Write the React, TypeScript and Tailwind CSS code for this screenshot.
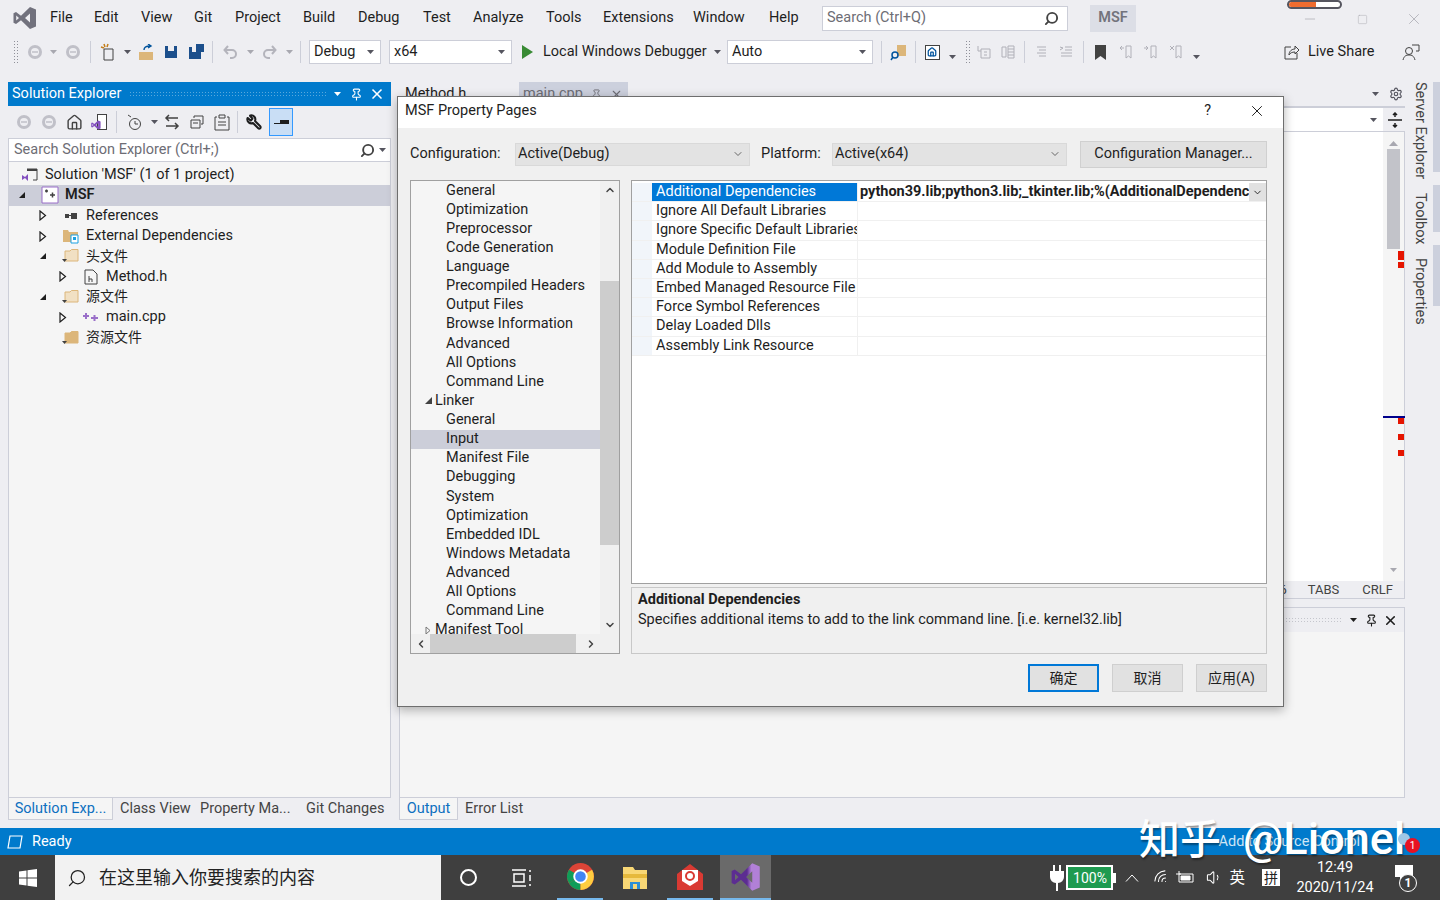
import { ReactNode } from 'react'
import { ChevronDown, ChevronLeft, ChevronRight, ChevronUp, Home, Minus, Pin, Search, Settings, Square, Volume1, Wifi, Wrench, X } from 'lucide-react'

const FONT = "font-['Roboto','Noto_Sans_CJK_SC',sans-serif]"

const MENU = [
  { label: 'File', w: 'w-[44px]' },
  { label: 'Edit', w: 'w-[47px]' },
  { label: 'View', w: 'w-[53px]' },
  { label: 'Git', w: 'w-[41px]' },
  { label: 'Project', w: 'w-[68px]' },
  { label: 'Build', w: 'w-[55px]' },
  { label: 'Debug', w: 'w-[65px]' },
  { label: 'Test', w: 'w-[50px]' },
  { label: 'Analyze', w: 'w-[73px]' },
  { label: 'Tools', w: 'w-[57px]' },
  { label: 'Extensions', w: 'w-[90px]' },
  { label: 'Window', w: 'w-[76px]' },
  { label: 'Help', w: 'w-[53px]' },
]

const LINKER_PAGES = [
  { label: 'General', depth: 2 },
  { label: 'Optimization', depth: 2 },
  { label: 'Preprocessor', depth: 2 },
  { label: 'Code Generation', depth: 2 },
  { label: 'Language', depth: 2 },
  { label: 'Precompiled Headers', depth: 2 },
  { label: 'Output Files', depth: 2 },
  { label: 'Browse Information', depth: 2 },
  { label: 'Advanced', depth: 2 },
  { label: 'All Options', depth: 2 },
  { label: 'Command Line', depth: 2 },
  { label: 'Linker', depth: 1, open: true },
  { label: 'General', depth: 2 },
  { label: 'Input', depth: 2, selected: true },
  { label: 'Manifest File', depth: 2 },
  { label: 'Debugging', depth: 2 },
  { label: 'System', depth: 2 },
  { label: 'Optimization', depth: 2 },
  { label: 'Embedded IDL', depth: 2 },
  { label: 'Windows Metadata', depth: 2 },
  { label: 'Advanced', depth: 2 },
  { label: 'All Options', depth: 2 },
  { label: 'Command Line', depth: 2 },
  { label: 'Manifest Tool', depth: 1, closed: true },
]

const PROPS = [
  'Additional Dependencies',
  'Ignore All Default Libraries',
  'Ignore Specific Default Libraries',
  'Module Definition File',
  'Add Module to Assembly',
  'Embed Managed Resource File',
  'Force Symbol References',
  'Delay Loaded Dlls',
  'Assembly Link Resource',
]

function Caret({ className = 'text-[#55555f]' }: { className?: string }) {
  return (
    <svg width="7" height="4" viewBox="0 0 7 4" className={`${className} shrink-0`}>
      <path d="M0 0h7L3.500 4z" fill="currentColor" />
    </svg>
  )
}

function Slot({ w, children }: { w: string; children?: ReactNode }) {
  return <div className={`${w} flex h-full shrink-0 items-center justify-center`}>{children}</div>
}

function Sep() {
  return <div className="h-[22px] w-px shrink-0 bg-[#ccced8]" />
}

function Grip() {
  return <div className="h-[24px] w-[5px] bg-[radial-gradient(#8f9099_1px,transparent_1px)] bg-[length:3px_3px]" />
}

function Round({ className = 'text-[#c0c0c8]' }: { className?: string }) {
  return (
    <svg width="16" height="16" viewBox="0 0 16 16" className={className}>
      <circle cx="8" cy="8" r="7" fill="currentColor" />
      <circle cx="8" cy="8" r="4" fill="#eeeef2" />
      <path d="M5 8h6" stroke="currentColor" strokeWidth="1.500" />
    </svg>
  )
}

function VsLogo({ color = '#71717d', size = 24 }: { color?: string; size?: number }) {
  return (
    <svg width={size} height={size} viewBox="0 0 24 24" className="shrink-0">
      <defs>
        <linearGradient id="vsg" x1="0" x2="1" y1="0" y2="0">
          <stop offset="0.55" stopColor="#5c2d91" />
          <stop offset="0.7" stopColor="#b180d7" />
        </linearGradient>
      </defs>
      <path
        fillRule="evenodd"
        fill={color}
        d="M17 1l6 2.600v16.800L17 23 8 14.200 3 18l-2.500-1.200V7.200L3 6l5 3.800zM17 7.400L12 12l5 4.600zM3.200 9.400v5.200L6 12z"
      />
    </svg>
  )
}

function Save({ className = 'text-[#1c4f8c]' }: { className?: string }) {
  return (
    <svg width="14" height="14" viewBox="0 0 14 14" className={className}>
      <path d="M1 1h12v12H1z" fill="currentColor" />
      <path d="M4 1h6v5H4z" fill="#eeeef2" />
    </svg>
  )
}

function ToolDoc({ d = 'M2 3h3M2 6h6M4 9h8M4 12h8M11 2v12' }: { d?: string }) {
  return (
    <svg width="16" height="16" viewBox="0 0 16 16" fill="none" stroke="#b0b0b8" className="shrink-0">
      <path d={d} />
    </svg>
  )
}

function TreeArrow({ open }: { open?: boolean }) {
  return open ? (
    <svg width="8" height="8" viewBox="0 0 8 8">
      <path d="M7 1v6H1z" fill="#1e1e1e" />
    </svg>
  ) : (
    <svg width="8" height="11" viewBox="0 0 8 11" fill="none">
      <path d="M1 1l5.500 4.500L1 10z" stroke="#1e1e1e" strokeWidth="1.200" />
    </svg>
  )
}

function FilterFolder({ solid }: { solid?: boolean }) {
  return (
    <svg width="18" height="16" viewBox="0 0 18 16">
      <path d="M3 3h5l1.500-1.500H16V13H3z" fill={solid ? '#dcb67a' : '#f1e0c3'} stroke="#dcb67a" />
      <path d="M0 11h5l-2.500 3z" fill="#424242" />
    </svg>
  )
}

function TreeRow({ indent, open, arrow, icon, children, selected, bold }: { indent: string; open?: boolean; arrow?: boolean; icon: ReactNode; children: ReactNode; selected?: boolean; bold?: boolean }) {
  return (
    <div className={`flex h-[20.3px] items-center text-[14.5px] text-[#1e1e1e] ${selected ? 'bg-[#ccced9]' : ''} ${bold ? 'font-semibold' : ''}`}>
      <div className={`${indent} flex shrink-0 justify-end ${arrow ? 'pr-[13px]' : ''}`}>{arrow && <TreeArrow open={open} />}</div>
      <div className="flex w-[21px] shrink-0 justify-center">{icon}</div>
      <span className="ml-[5px] whitespace-nowrap">{children}</span>
    </div>
  )
}

function TitleRow() {
  return (
    <div className="flex h-[36px] items-center text-[14.5px] text-[#1e1e1e]">
      <div className="flex w-[50px] shrink-0 justify-center">
        <VsLogo />
      </div>
      {MENU.map(m => (
        <div key={m.label} className={`${m.w} shrink-0`}>{m.label}</div>
      ))}
      <div className="flex h-[25px] w-[246px] shrink-0 items-center justify-between border border-[#ccced8] bg-white pl-[4px] pr-[8px] text-[#6d6d75]">
        <span>Search (Ctrl+Q)</span>
        <Search size={15} strokeWidth={3} className="-scale-x-100 text-[#424242]" />
      </div>
      <div className="ml-[22px] flex h-[27px] w-[46px] shrink-0 items-center justify-center bg-[#dcdee6] font-semibold text-[#73737c]">MSF</div>
      <div className="relative flex-1">
        <div className="absolute left-[151px] top-[-18px] h-[9px] w-[55px] overflow-hidden rounded-full border-2 border-[#55555f] bg-white">
          <div className="h-full w-[27px] bg-[#ef6c2f]" />
        </div>
        <div className="absolute left-[166px] top-[-8px] flex items-center text-[#a6a6ae]">
          <Minus size={16} strokeWidth={1} />
          <div className="ml-[36px] flex h-[16px] w-[16px] items-center justify-center">
            <Square size={11} strokeWidth={1} />
          </div>
          <X size={18} strokeWidth={1} className="ml-[35px]" />
        </div>
      </div>
    </div>
  )
}

function Combo({ w, label }: { w: string; label: string }) {
  return (
    <div className={`${w} flex h-[24px] shrink-0 items-center justify-between border border-[#ccced8] bg-white pl-[4px] pr-[6px]`}>
      <span>{label}</span>
      <Caret />
    </div>
  )
}

function ToolbarRow() {
  return (
    <div className="flex h-[32px] items-center text-[14.5px] text-[#1e1e1e]">
      <Slot w="w-[26px]"><div className="ml-[4px]"><Grip /></div></Slot>
      <Slot w="w-[18px]"><Round /></Slot>
      <Slot w="w-[18px]"><Caret className="text-[#a8a8b0]" /></Slot>
      <Slot w="w-[22px]"><Round /></Slot>
      <Slot w="w-[12px]"><Sep /></Slot>
      <Slot w="w-[24px]">
        <svg width="16" height="18" viewBox="0 0 16 18" fill="none">
          <path d="M4 6h9v11H4z" stroke="#424242" />
          <path d="M4 1l1 3M1 4l3 1M8 1L7 4" stroke="#c27d1a" strokeWidth="1.500" />
        </svg>
      </Slot>
      <Slot w="w-[14px]"><Caret /></Slot>
      <Slot w="w-[24px]">
        <svg width="17" height="17" viewBox="0 0 17 17">
          <path d="M1 8h14v8H1z" fill="#dcb67a" />
          <path d="M6 6c0-3 3-4 6-4M10 0l3 2-3 2" fill="none" stroke="#00539c" strokeWidth="1.400" />
        </svg>
      </Slot>
      <Slot w="w-[26px]"><Save /></Slot>
      <Slot w="w-[24px]">
        <div className="relative h-[16px] w-[16px]">
          <div className="absolute bottom-0 left-0"><Save /></div>
          <div className="absolute right-0 top-0 h-[8px] w-[8px] bg-[#1c4f8c]" />
        </div>
      </Slot>
      <Slot w="w-[8px]"><Sep /></Slot>
      <Slot w="w-[28px]">
        <svg width="15" height="15" viewBox="0 0 15 15" fill="none" stroke="#b4b4bc" strokeWidth="2">
          <path d="M2 5h7a4 4 0 010 8H7M5 1L1.500 5 5 9" />
        </svg>
      </Slot>
      <Slot w="w-[12px]"><Caret className="text-[#a8a8b0]" /></Slot>
      <Slot w="w-[26px]">
        <svg width="15" height="15" viewBox="0 0 15 15" fill="none" stroke="#b4b4bc" strokeWidth="2">
          <path d="M13 5H6a4 4 0 000 8h2M10 1l3.500 4L10 9" />
        </svg>
      </Slot>
      <Slot w="w-[14px]"><Caret className="text-[#a8a8b0]" /></Slot>
      <Slot w="w-[8px]"><Sep /></Slot>
      <div className="w-[5px] shrink-0" />
      <Combo w="w-[72px]" label="Debug" />
      <div className="w-[8px] shrink-0" />
      <Combo w="w-[123px]" label="x64" />
      <Slot w="w-[31px]">
        <svg width="11" height="14" viewBox="0 0 11 14"><path d="M0 0l11 7-11 7z" fill="#388a34" /></svg>
      </Slot>
      <div className="w-[164px] shrink-0 whitespace-nowrap">Local Windows Debugger</div>
      <Slot w="w-[20px]"><Caret /></Slot>
      <Combo w="w-[146px]" label="Auto" />
      <Slot w="w-[16px]"><Sep /></Slot>
      <Slot w="w-[18px]">
        <svg width="17" height="17" viewBox="0 0 17 17">
          <path d="M7 1h9v11H7z" fill="#dcb67a" />
          <circle cx="5" cy="11" r="3" fill="none" stroke="#00539c" strokeWidth="1.500" />
          <path d="M3 13l-2 3" stroke="#00539c" strokeWidth="1.500" />
        </svg>
      </Slot>
      <Slot w="w-[16px]"><Sep /></Slot>
      <Slot w="w-[18px]">
        <div className="flex h-[15px] w-[15px] items-center justify-center border border-[#424242] bg-white">
          <Home size={10} strokeWidth={3} className="text-[#00539c]" />
        </div>
      </Slot>
      <Slot w="w-[22px]"><div className="mt-[10px]"><Caret /></div></Slot>
      <Slot w="w-[8px]"><Grip /></Slot>
      <div className="w-px shrink-0" />
      <Slot w="w-[24px]"><ToolDoc d="M2 2v5h3M5 5h9v9H5zM8 8h3M8 11h3" /></Slot>
      <Slot w="w-[24px]"><ToolDoc d="M2 3h4v10H2zM8 2h6v12H8zM8 5h6M8 8h6M8 11h6" /></Slot>
      <Slot w="w-[8px]"><Sep /></Slot>
      <Slot w="w-[28px]"><ToolDoc d="M3 3h9M5 6h7M3 9h9M5 12h7" /></Slot>
      <Slot w="w-[20px]"><ToolDoc d="M2 3l3 1-3 2M7 3h7M7 6h7M3 9h11M3 12h11" /></Slot>
      <Slot w="w-[14px]"><Sep /></Slot>
      <Slot w="w-[20px]">
        <svg width="11" height="15" viewBox="0 0 11 15"><path d="M0 0h11v15l-5.500-4L0 15z" fill="#424242" /></svg>
      </Slot>
      <Slot w="w-[32px]"><ToolDoc d="M8 2h5v12l-2.500-2L8 14zM6 4H2l2-2M2 4l2 2" /></Slot>
      <Slot w="w-[18px]"><ToolDoc d="M8 2h5v12l-2.500-2L8 14zM1 4h4l-2-2M5 4L3 6" /></Slot>
      <Slot w="w-[32px]"><ToolDoc d="M8 2h5v12l-2.500-2L8 14zM2 2l4 4M6 2L2 6" /></Slot>
      <Slot w="w-[8px]"><div className="mt-[10px]"><Caret /></div></Slot>
      <div className="ml-[84px] flex h-full shrink-0 items-center">
        <svg width="16" height="16" viewBox="0 0 16 16" fill="none" stroke="#424242">
          <path d="M7 3H1v12h12V9M5 11c0-4 3-6 6-6V2l4 4-4 4V8c-3 0-5 1-6 3z" />
        </svg>
        <span className="ml-[8px] w-[65px] whitespace-nowrap">Live Share</span>
        <svg width="18" height="18" viewBox="0 0 18 18" fill="none" stroke="#424242" className="ml-[29px]">
          <circle cx="7" cy="8" r="3.500" />
          <path d="M1 17c1-4 3-5 6-5s5 1 6 5M10 2h7v6h-3" />
        </svg>
      </div>
    </div>
  )
}

function SolutionExplorer() {
  return (
    <div className="flex w-[383px] shrink-0 flex-col">
      <div className="flex h-[24px] shrink-0 items-center bg-[#007acc] pl-[4px] pr-[6px] text-[14.5px] text-white">
        <span className="whitespace-nowrap">Solution Explorer</span>
        <div className="mx-[8px] h-[6px] flex-1 bg-[radial-gradient(#59a8dd_1px,transparent_1px)] bg-[length:3px_3px]" />
        <Caret className="text-white" />
        <Pin size={13} className="ml-[9px] text-white" />
        <X size={16} strokeWidth={2.500} className="ml-[6px] text-white" />
      </div>
      <div className="flex h-[32px] shrink-0 items-center pl-[6px]">
        <Slot w="w-[20px]"><Round /></Slot>
        <Slot w="w-[30px]"><Round /></Slot>
        <Slot w="w-[20px]"><Home size={17} className="text-[#424242]" /></Slot>
        <Slot w="w-[30px]">
          <div className="relative h-[16px] w-[16px]">
            <div className="absolute right-0 top-0 h-[16px] w-[10px] border border-[#424242] bg-white" />
            <div className="absolute bottom-0 left-0"><VsLogo color="#8450c0" size={10} /></div>
          </div>
        </Slot>
        <Slot w="w-[4px]"><Sep /></Slot>
        <Slot w="w-[32px]">
          <svg width="16" height="17" viewBox="0 0 16 17" fill="none" stroke="#424242">
            <circle cx="9" cy="10" r="5.500" />
            <path d="M9 7v3h3M2 1l3 2" />
          </svg>
        </Slot>
        <Slot w="w-[8px]"><Caret /></Slot>
        <Slot w="w-[28px]">
          <svg width="16" height="16" viewBox="0 0 16 16" fill="none" stroke="#424242" strokeWidth="1.500">
            <path d="M5 1L2 4l3 3M2 4h12M11 9l3 3-3 3M14 12H2" />
          </svg>
        </Slot>
        <Slot w="w-[22px]">
          <svg width="14" height="14" viewBox="0 0 14 14" fill="none" stroke="#424242">
            <path d="M4 3V1h9v8h-2M1 5h9v8H1zM3 8h5" />
          </svg>
        </Slot>
        <Slot w="w-[28px]">
          <svg width="16" height="17" viewBox="0 0 16 17" fill="none" stroke="#424242">
            <path d="M3 3H1v13h14V3h-2M5 1h6v3H5zM4 8h8M4 11h8" />
          </svg>
        </Slot>
        <Slot w="w-[3px]"><Sep /></Slot>
        <Slot w="w-[30px]"><Wrench size={16} strokeWidth={3} className="-scale-x-100 text-[#1e1e1e]" /></Slot>
        <div className="flex h-[28px] w-[24px] items-center justify-center border border-[#3399ff] bg-[#c9def5]">
          <div className="flex items-end">
            <div className="h-px w-[6px] bg-[#1e1e1e]" />
            <div className="h-[4px] w-[9px] bg-[#1e1e1e]" />
          </div>
        </div>
      </div>
      <div className="flex h-[24px] shrink-0 items-center justify-between border border-[#ccced8] bg-white pl-[5px] pr-[4px] text-[14.5px] text-[#6d6d75]">
        <span>Search Solution Explorer (Ctrl+;)</span>
        <div className="flex items-center gap-[4px]">
          <Search size={15} strokeWidth={3} className="-scale-x-100 text-[#424242]" />
          <Caret />
        </div>
      </div>
      <div className="min-h-0 flex-1 border border-t-0 border-[#ccced8] bg-[#f5f5f5] pt-[3px]">
        <TreeRow indent="w-[10px]" icon={<svg width="17" height="16" viewBox="0 0 17 16" fill="none"><path d="M6 2h10v11h-4" stroke="#424242" /><path d="M6 2h10v2H6z" fill="#424242" /><path d="M1 8l3 2 3-3v7l-3-3-3 2z" fill="#8450c0" /></svg>}>
          Solution 'MSF' (1 of 1 project)
        </TreeRow>
        <TreeRow indent="w-[30px]" arrow open selected bold icon={<svg width="18" height="18" viewBox="0 0 18 18" fill="none"><path d="M1 1h16v16H1z" fill="#fff" stroke="#9a6fc9" /><path d="M4 5h3M5.500 3.500v3M9 9h5M11.500 6.500v5" stroke="#424242" strokeWidth="1.500" /></svg>}>
          MSF
        </TreeRow>
        <TreeRow indent="w-[51px]" arrow icon={<div className="flex items-center"><div className="h-[4px] w-[4px] bg-[#424242]" /><div className="h-px w-[2px] bg-[#424242]" /><div className="h-[6px] w-[6px] bg-[#424242]" /></div>}>References</TreeRow>
        <TreeRow indent="w-[51px]" arrow icon={<svg width="17" height="16" viewBox="0 0 17 16"><path d="M1 2h5l1 2h9v10H1z" fill="#dcb67a" /><path d="M9 7h7v8H9z" fill="#fff" stroke="#1ba1e2" /><path d="M11 9h3v3h-3z" fill="#1ba1e2" /></svg>}>External Dependencies</TreeRow>
        <TreeRow indent="w-[51px]" arrow open icon={<FilterFolder />}><span className="text-[14px]">头文件</span></TreeRow>
        <TreeRow indent="w-[71px]" arrow icon={<svg width="14" height="16" viewBox="0 0 14 16" fill="none" stroke="#424242"><path d="M1 1h8l4 4v10H1z" /><path d="M5 7v6M5 10h3v3" /></svg>}>Method.h</TreeRow>
        <TreeRow indent="w-[51px]" arrow open icon={<FilterFolder />}><span className="text-[14px]">源文件</span></TreeRow>
        <TreeRow indent="w-[71px]" arrow icon={<svg width="16" height="10" viewBox="0 0 16 10" fill="none" stroke="#9a6fc9" strokeWidth="2"><path d="M0 4h6M3 1v6M8 6h7M11.500 3v6" /></svg>}>main.cpp</TreeRow>
        <TreeRow indent="w-[51px]" icon={<FilterFolder solid />}><span className="text-[14px]">资源文件</span></TreeRow>
      </div>
      <div className="flex h-[22px] shrink-0 items-center whitespace-nowrap text-[14.5px] text-[#444]">
        <div className="flex h-full w-[105px] items-center justify-center border border-t-0 border-[#ccced8] bg-[#f5f5f5] text-[#0e70c0]">Solution Exp...</div>
        <span className="ml-[7px] w-[80px]">Class View</span>
        <span className="w-[106px]">Property Ma...</span>
        <span>Git Changes</span>
      </div>
    </div>
  )
}

function Workspace() {
  return (
    <div className="flex w-[1006px] shrink-0 flex-col">
      <div className="flex h-[24px] shrink-0 items-center text-[14.5px] text-[#1e1e1e]">
        <span className="ml-[6px] w-[114px]">Method.h</span>
        <div className="flex h-full w-[109px] items-center gap-[8px] bg-[#ccd0dd] pl-[4px] text-[#6d6d75]">
          main.cpp <Pin size={11} /> <X size={13} />
        </div>
        <div className="ml-auto flex items-center gap-[10px] pr-[2px]">
          <Caret />
          <Settings size={14} className="text-[#55555f]" />
        </div>
      </div>
      <div className="flex h-[25px] shrink-0 justify-end border-t-2 border-[#ccced8]">
        <div className="flex h-full flex-1 items-center justify-end bg-white pr-[6px]"><Caret /></div>
        <div className="ml-[2px] flex w-[20px] items-center justify-center text-[#1e1e1e]">
          <svg width="14" height="16" viewBox="0 0 14 16" fill="none" stroke="currentColor" strokeWidth="1.500">
            <path d="M0 8h14M7 1v4M7 11v4M5 3l2-2 2 2M5 13l2 2 2-2" />
          </svg>
        </div>
      </div>
      <div className="flex h-[450px] min-h-0 shrink-0 border-t border-[#ccced8]">
        <div className="flex-1 bg-white" />
        <div className="relative flex w-[22px] flex-col items-center border-r border-[#ccced8] bg-[#f5f5f5]">
          <div className="mt-[9px]"><svg width="9" height="5" viewBox="0 0 9 5"><path d="M0 5h9L4.500 0z" fill="#a8a8b0" /></svg></div>
          <div className="mt-[3px] h-[100px] w-[13px] bg-[#c2c3c9]" />
          <div className="absolute left-[15px] top-[119px] h-[9px] w-[6px] bg-[#e51400]" />
          <div className="absolute left-[15px] top-[130px] h-[6px] w-[6px] bg-[#e51400]" />
          <div className="absolute left-0 top-[284px] h-[2px] w-[22px] bg-[#00008b]" />
          <div className="absolute left-[15px] top-[286px] h-[6px] w-[6px] bg-[#e51400]" />
          <div className="absolute left-[15px] top-[302px] h-[6px] w-[6px] bg-[#e51400]" />
          <div className="absolute left-[15px] top-[318px] h-[6px] w-[6px] bg-[#e51400]" />
          <div className="absolute bottom-[9px]"><Caret className="text-[#a8a8b0]" /></div>
        </div>
      </div>
      <div className="flex h-[18px] shrink-0 items-center justify-end border border-t-0 border-[#ccced8] pr-[11px] text-[13px] text-[#444]">
        <span className="mr-[21px]">6</span>
        <span>TABS</span>
        <span className="ml-[23px]">CRLF</span>
      </div>
      <div className="mt-[8px] flex min-h-0 flex-1 flex-col border border-[#ccced8] bg-[#f5f5f5]">
        <div className="flex h-[24px] shrink-0 items-center justify-end bg-[#eeeef2] pr-[6px]">
          <div className="mr-[8px] h-[6px] w-[60px] bg-[radial-gradient(#c5c6cd_1px,transparent_1px)] bg-[length:3px_3px]" />
          <Caret className="text-[#1e1e1e]" />
          <Pin size={13} className="ml-[8px] text-[#1e1e1e]" />
          <X size={15} strokeWidth={2.500} className="ml-[5px] text-[#1e1e1e]" />
        </div>
      </div>
      <div className="flex h-[22px] shrink-0 items-center text-[14.5px] text-[#444]">
        <div className="flex h-full w-[59px] items-center justify-center border border-t-0 border-[#ccced8] bg-[#f5f5f5] text-[#0e70c0]">Output</div>
        <span className="ml-[7px]">Error List</span>
      </div>
    </div>
  )
}

function SideTabs() {
  return (
    <div className="ml-[5px] flex flex-1 gap-[3px] text-[14.5px] text-[#444]">
      <div className="flex w-[20px] flex-col">
        <span className="h-[96px] whitespace-nowrap leading-[20px] [writing-mode:vertical-rl]">Server Explorer</span>
        <span className="mt-[15px] h-[50px] whitespace-nowrap leading-[20px] [writing-mode:vertical-rl]">Toolbox</span>
        <span className="mt-[15px] h-[64px] whitespace-nowrap leading-[20px] [writing-mode:vertical-rl]">Properties</span>
      </div>
      <div className="flex flex-1 flex-col">
        <div className="h-[90px] bg-[#ccd0dd]" />
        <div className="mt-[13px] h-[47px] bg-[#ccd0dd]" />
        <div className="mt-[13px] h-[61px] bg-[#ccd0dd]" />
      </div>
    </div>
  )
}

function DialogSelect({ w, label }: { w: string; label: string }) {
  return (
    <div className={`${w} flex h-[23px] shrink-0 items-center justify-between border border-[#d9d9d9] bg-[#e3e3e3] pl-[2px] pr-[5px]`}>
      <span>{label}</span>
      <ChevronDown size={12} className="text-[#666]" />
    </div>
  )
}

function PropertyDialog() {
  return (
    <div className="absolute left-[397px] top-[96px] flex h-[611px] w-[887px] flex-col border border-[#6e6e6e] bg-[#f0f0f0] text-[14.5px] text-[#1e1e1e] shadow-[0_3px_10px_rgba(0,0,0,0.3)]">
      <div className="flex h-[31px] shrink-0 items-center justify-between bg-white pb-[3px] pl-[7px] pr-[17px]">
        <span>MSF Property Pages</span>
        <div className="flex items-center gap-[37px]">
          <span>?</span>
          <X size={18} strokeWidth={1.300} />
        </div>
      </div>
      <div className="flex h-[52px] shrink-0 items-center pl-[12px]">
        <span className="w-[105px]">Configuration:</span>
        <DialogSelect w="w-[235px]" label="Active(Debug)" />
        <span className="ml-[11px] w-[71px]">Platform:</span>
        <DialogSelect w="w-[235px]" label="Active(x64)" />
        <div className="ml-[13px] flex h-[27px] w-[187px] items-center justify-center border border-[#d0d0d0] bg-[#e1e1e1]">Configuration Manager...</div>
      </div>
      <div className="flex h-[474px] shrink-0 pl-[12px] pr-[16px]">
        <div className="flex h-full w-[210px] shrink-0 flex-col border border-[#a0a0a0] bg-[#f5f5f5]">
          <div className="flex min-h-0 flex-1">
            <div className="min-w-0 flex-1 overflow-hidden">
              {LINKER_PAGES.map((p, i) => (
                <div key={i} className={`flex h-[19.13px] items-center whitespace-nowrap ${p.selected ? 'bg-[#ccced9]' : ''} ${p.depth === 2 ? 'pl-[35px]' : 'pl-[14px]'}`}>
                  {p.open && <svg width="7" height="7" viewBox="0 0 7 7" className="mr-[3px]"><path d="M7 0v7H0z" fill="#424242" /></svg>}
                  {p.closed && <svg width="7" height="9" viewBox="0 0 7 9" className="mr-[3px]" fill="none"><path d="M1 1l4 3.500-4 3.500z" stroke="#777" /></svg>}
                  {p.label}
                </div>
              ))}
            </div>
            <div className="flex w-[19px] shrink-0 flex-col items-center bg-[#f0f0f0]">
              <div className="flex h-[18px] items-center"><ChevronUp size={12} strokeWidth={3} className="text-[#444]" /></div>
              <div className="mt-[82px] h-[264px] w-full bg-[#cdcdcd]" />
              <div className="mt-auto flex h-[18px] items-center"><ChevronDown size={12} strokeWidth={3} className="text-[#444]" /></div>
            </div>
          </div>
          <div className="flex h-[19px] shrink-0 items-center bg-[#f0f0f0]">
            <div className="flex w-[19px] justify-center"><ChevronLeft size={12} strokeWidth={3} className="text-[#444]" /></div>
            <div className="h-full w-[146px] bg-[#cdcdcd]" />
            <div className="ml-[5px] flex w-[19px] justify-center"><ChevronRight size={12} strokeWidth={3} className="text-[#444]" /></div>
          </div>
        </div>
        <div className="ml-[11px] flex min-w-0 flex-1 flex-col">
          <div className="h-[404px] shrink-0 border border-[#a0a0a0] bg-white pt-[2px]">
            {PROPS.map((p, i) => (
              <div key={p} className="flex h-[19.2px] items-center border-b border-[#f0f0f0]">
                <div className="h-full w-[20px] shrink-0 bg-[#f1f5fa]" />
                <div className={`flex h-full w-[205px] shrink-0 items-center overflow-hidden whitespace-nowrap pl-[4px] ${i === 0 ? 'bg-[#0078d7] text-white' : ''}`}>{p}</div>
                <div className="flex h-full min-w-0 flex-1 items-center border-l border-[#f0f0f0]">
                  {i === 0 && (
                    <>
                      <span className="min-w-0 flex-1 overflow-hidden whitespace-nowrap pl-[2px] font-bold">python39.lib;python3.lib;_tkinter.lib;%(AdditionalDependencies)</span>
                      <div className="flex h-full w-[17px] shrink-0 items-center justify-center bg-[#e1e1e1]"><ChevronDown size={11} /></div>
                    </>
                  )}
                </div>
              </div>
            ))}
          </div>
          <div className="mt-[3px] h-[67px] shrink-0 border border-[#c8c8c8] px-[6px] pt-[2px] leading-[20px]">
            <div className="font-bold">Additional Dependencies</div>
            <div>Specifies additional items to add to the link command line. [i.e. kernel32.lib]</div>
          </div>
        </div>
      </div>
      <div className="flex flex-1 justify-end gap-[13px] pr-[16px] pt-[10px] text-[14px]">
        <button className="h-[28px] w-[71px] border-2 border-[#0078d7] bg-[#e1e1e1]">确定</button>
        <button className="h-[28px] w-[71px] border border-[#cfcfcf] bg-[#e1e1e1]">取消</button>
        <button className="h-[28px] w-[71px] border border-[#cfcfcf] bg-[#e1e1e1]">应用(A)</button>
      </div>
    </div>
  )
}

function Taskbar() {
  return (
    <div className="flex h-[45px] shrink-0 items-center bg-[#3f3f3f] text-white">
      <div className="flex w-[55px] shrink-0 justify-center">
        <svg width="18" height="18" viewBox="0 0 18 18" fill="#fff">
          <path d="M0 2.500l7.500-1V8.500H0zM8.500 1.300L18 0v8.500H8.500zM0 9.500h7.500v7l-7.500-1zM8.500 9.500H18V18l-9.500-1.300z" />
        </svg>
      </div>
      <div className="flex h-full w-[386px] shrink-0 items-center bg-[#f2f2f2] pl-[12px] text-[18px] text-[#222]">
        <Search size={20} strokeWidth={1.500} className="-scale-x-100" />
        <span className="ml-[12px]">在这里输入你要搜索的内容</span>
      </div>
      <div className="flex w-[54px] shrink-0 justify-center">
        <div className="h-[17px] w-[17px] rounded-full border-2 border-white" />
      </div>
      <div className="flex w-[54px] shrink-0 justify-center">
        <svg width="20" height="18" viewBox="0 0 20 18" fill="none" stroke="#fff" strokeWidth="1.500">
          <path d="M0 1h14M0 17h14M2 5h10v8H2zM18 1v2M18 6v6M18 15v2" />
        </svg>
      </div>
      <div className="ml-[8px] flex h-full w-[46px] shrink-0 items-center justify-center border-b-2 border-[#76b9ed]">
        <svg width="27" height="27" viewBox="0 0 28 28">
          <circle cx="14" cy="14" r="14" fill="#db4437" />
          <path d="M14 14L2 21A14 14 0 0014 28z" fill="#0f9d58" />
          <path d="M14 14L2 7A14 14 0 002 21z" fill="#0f9d58" />
          <path d="M14 14L26 7A14 14 0 0114 28z" fill="#ffcd40" />
          <circle cx="14" cy="14" r="6.500" fill="#4285f4" stroke="#fff" strokeWidth="2" />
        </svg>
      </div>
      <div className="flex h-full w-[64px] shrink-0 items-center justify-center">
        <svg width="26" height="24" viewBox="0 0 26 24">
          <path d="M1 1h10l2 3h12v19H1z" fill="#f8d775" />
          <path d="M1 8h24v4H1z" fill="#e6b93c" />
          <path d="M8 16h10v7H8z" fill="#2d8fd5" />
          <path d="M11 18h4v5h-4z" fill="#f8d775" />
        </svg>
      </div>
      <div className="flex h-full w-[46px] shrink-0 items-center justify-center border-b-2 border-[#76b9ed]">
        <svg width="28" height="28" viewBox="0 0 28 28">
          <path d="M1 11L14 1l13 10v16H1z" fill="#d93a33" />
          <path d="M6 7h16v11l-8 5-8-5z" fill="#fff" />
          <circle cx="14" cy="13" r="4" fill="none" stroke="#d93a33" strokeWidth="2" />
        </svg>
      </div>
      <div className="ml-[7px] flex h-full w-[51px] shrink-0 items-center justify-center border-b-2 border-[#76b9ed] bg-[#6a6a6a]">
        <VsLogo color="url(#vsg)" size={30} />
      </div>
      <div className="ml-auto flex h-full items-center">
        <svg width="14" height="26" viewBox="0 0 14 26" fill="#fff">
          <path d="M3 0h2v6h4V0h2v6h3v6a6 6 0 01-6 6v8H6v-8a6 6 0 01-6-6V6h3z" />
        </svg>
        <div className="ml-[2px] flex h-[25px] w-[47px] items-center justify-center border-2 border-white bg-[#1e9a50] text-[14px]">100%</div>
        <div className="h-[10px] w-[3px] bg-white" />
        <svg width="14" height="8" viewBox="0 0 14 8" fill="none" stroke="#fff" className="ml-[9px]"><path d="M1 7.500L7 1l6 6.500" /></svg>
        <Wifi size={17} strokeWidth={1.500} className="ml-[14px] -rotate-45" />
        <svg width="18" height="14" viewBox="0 0 18 14" fill="none" stroke="#fff" className="ml-[6px]">
          <path d="M3 3h14v8H3z" /><path d="M5 5h9v4H5z" fill="#fff" /><path d="M3 0v3M0 3h5" />
        </svg>
        <Volume1 size={17} strokeWidth={1.500} className="ml-[12px]" />
        <span className="ml-[6px] text-[15.5px]">英</span>
        <div className="ml-[17px] flex h-[17px] w-[18px] items-center justify-center bg-white text-[14px] leading-none text-[#222]">拼</div>
        <div className="ml-[17px] flex w-[76px] flex-col items-center text-[14.5px] leading-[20px]">
          <span>12:49</span>
          <span>2020/11/24</span>
        </div>
        <div className="relative ml-[22px] mr-[27px] h-[26px] w-[18px]">
          <svg width="18" height="16" viewBox="0 0 18 16" fill="#fff"><path d="M0 0h18v12H8l-3 4v-4H0z" /></svg>
          <div className="absolute left-[4px] top-[9px] flex h-[18px] w-[18px] items-center justify-center rounded-full border border-white bg-[#3f3f3f] text-[12px] font-bold">1</div>
        </div>
      </div>
    </div>
  )
}

export default function App() {
  return (
    <div className={`${FONT} relative flex h-[900px] w-[1440px] flex-col overflow-hidden bg-[#eeeef2] leading-[22px]`}>
      <TitleRow />
      <ToolbarRow />
      <div className="mt-[14px] flex min-h-0 flex-1 pl-[8px]">
        <SolutionExplorer />
        <div className="w-[8px] shrink-0" />
        <Workspace />
        <SideTabs />
      </div>
      <div className="mt-[8px] flex h-[27px] shrink-0 items-center bg-[#007acc] pl-[7px] pr-[80px] text-[14.5px] text-white">
        <svg width="16" height="14" viewBox="0 0 16 14" fill="none" stroke="#fff" strokeWidth="1.200"><path d="M3 1h12l-2 12H1z" /></svg>
        <span className="ml-[9px]">Ready</span>
        <span className="ml-auto whitespace-nowrap text-[#cfe6f6]">Add to Source Control</span>
      </div>
      <Taskbar />
      <PropertyDialog />
      <div className="absolute left-[1139px] top-[814px] flex items-baseline whitespace-nowrap font-medium leading-[50px] text-white [text-shadow:1px_2px_2px_rgba(0,0,0,0.4)]">
        <span className="text-[41px]">知乎</span>
        <span className="ml-[22px] text-[45px]">@Lionel</span>
      </div>
      <div className="absolute left-[1398px] top-[833px] h-[12px] w-[12px] rounded-full bg-[#9fc7e6]" />
      <div className="absolute left-[1405px] top-[838px] flex h-[15px] w-[15px] items-center justify-center rounded-full bg-[#e81123] text-[10px] text-white">1</div>
    </div>
  )
}
